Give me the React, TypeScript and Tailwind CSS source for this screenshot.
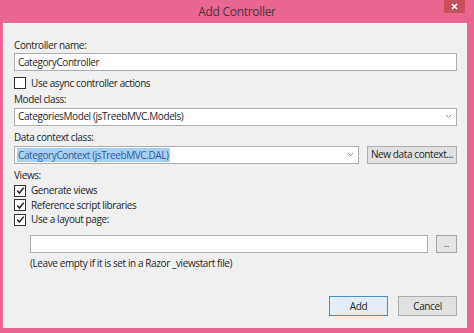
import React from 'react';

function Check({ checked, label }: { checked?: boolean; label: string }) {
  return (
    <div className="flex items-center h-[14.5px]">
      <div className="w-[12px] h-[12px] border border-[#333333] bg-white flex items-center justify-center">
        {checked && (
          <svg width="9" height="9" viewBox="0 0 9 9">
            <path d="M1.2 4.6 L3.4 7 L7.8 1.6" fill="none" stroke="#202020" strokeWidth="1.5" />
          </svg>
        )}
      </div>
      <span className="ml-[5px]">{label}</span>
    </div>
  );
}

function Chevron() {
  return (
    <svg width="7" height="5" viewBox="0 0 7 5" className="shrink-0">
      <path d="M1 1 L3.5 3.5 L6 1" fill="none" stroke="#8a8a8a" strokeWidth="1" />
    </svg>
  );
}

export default function App() {
  return (
    <div
      className="w-[474px] h-[333px] bg-[#e8668f] flex flex-col text-[10px] tracking-[-0.4px] text-[#1e1e1e]"
      style={{ fontFamily: '"Open Sans", "Noto Sans", sans-serif' }}
    >
      {/* title bar */}
      <div className="relative h-[23px] shrink-0 flex items-center justify-center">
        <span className="text-[12px] tracking-[-0.3px] text-[#4a3440] leading-none">Add Controller</span>
        <div className="absolute top-0 right-[9px] w-[21px] h-[13px] bg-[#c8505a] flex items-center justify-center">
          <svg width="7" height="7" viewBox="0 0 7 7">
            <path d="M1 1 L6 6 M6 1 L1 6" stroke="#ffffff" strokeWidth="1.6" />
          </svg>
        </div>
      </div>

      {/* body */}
      <div className="flex-1 ml-[3px] mr-[7px] mb-[5px] bg-[#f0f0f0] border-t border-l border-[#fafafa] px-[10px] pt-[13px] pb-[12px] flex flex-col">
        <div className="h-[16px] flex items-center">Controller name:</div>
        <div className="h-[18px] bg-white border border-[#abadb3] flex items-center px-[3px]">
          CategoryController
        </div>
        <div className="mt-[5px]">
          <Check label="Use async controller actions" />
        </div>

        <div className="h-[16px] mt-[1px] flex items-center">Model class:</div>
        <div className="h-[18px] bg-white border border-[#abadb3] flex items-center justify-between pl-[3px] pr-[4px]">
          <span>CategoriesModel (jsTreebMVC.Models)</span>
          <Chevron />
        </div>

        <div className="h-[16px] mt-[4px] flex items-center">Data context class:</div>
        <div className="flex gap-[8px]">
          <div className="flex-1 h-[18px] bg-white border border-[#abadb3] flex items-center justify-between pl-[2px] pr-[4px]">
            <span className="bg-[#a9d0f3] text-[#2a5d9c] px-[1px] leading-[14px]">
              CategoryContext (jsTreebMVC.DAL)
            </span>
            <Chevron />
          </div>
          <div className="w-[90px] h-[18px] bg-[#e1e1e1] border border-[#adadad] flex items-center justify-center whitespace-nowrap">
            New data context...
          </div>
        </div>

        <div className="h-[16px] mt-[4px] flex items-center">Views:</div>
        <Check checked label="Generate views" />
        <Check checked label="Reference script libraries" />
        <Check checked label="Use a layout page:" />

        <div className="flex gap-[8px] mt-[8px] ml-[16px]">
          <div className="flex-1 h-[18px] bg-white border border-[#abadb3]" />
          <div className="w-[21px] h-[18px] bg-[#e5e5e5] border border-[#a5a5a5] flex items-end justify-center pb-[4px] text-[8px] leading-none">
            ...
          </div>
        </div>
        <div className="h-[15px] mt-[3px] ml-[16px] flex items-center">
          (Leave empty if it is set in a Razor _viewstart file)
        </div>

        <div className="mt-auto flex justify-end gap-[10px]">
          <div className="w-[59px] h-[20px] bg-[#e5eef7] border border-[#4a8ed0] flex items-center justify-center">
            Add
          </div>
          <div className="w-[59px] h-[20px] bg-[#e1e1e1] border border-[#adadad] flex items-center justify-center">
            Cancel
          </div>
        </div>
      </div>
    </div>
  );
}
